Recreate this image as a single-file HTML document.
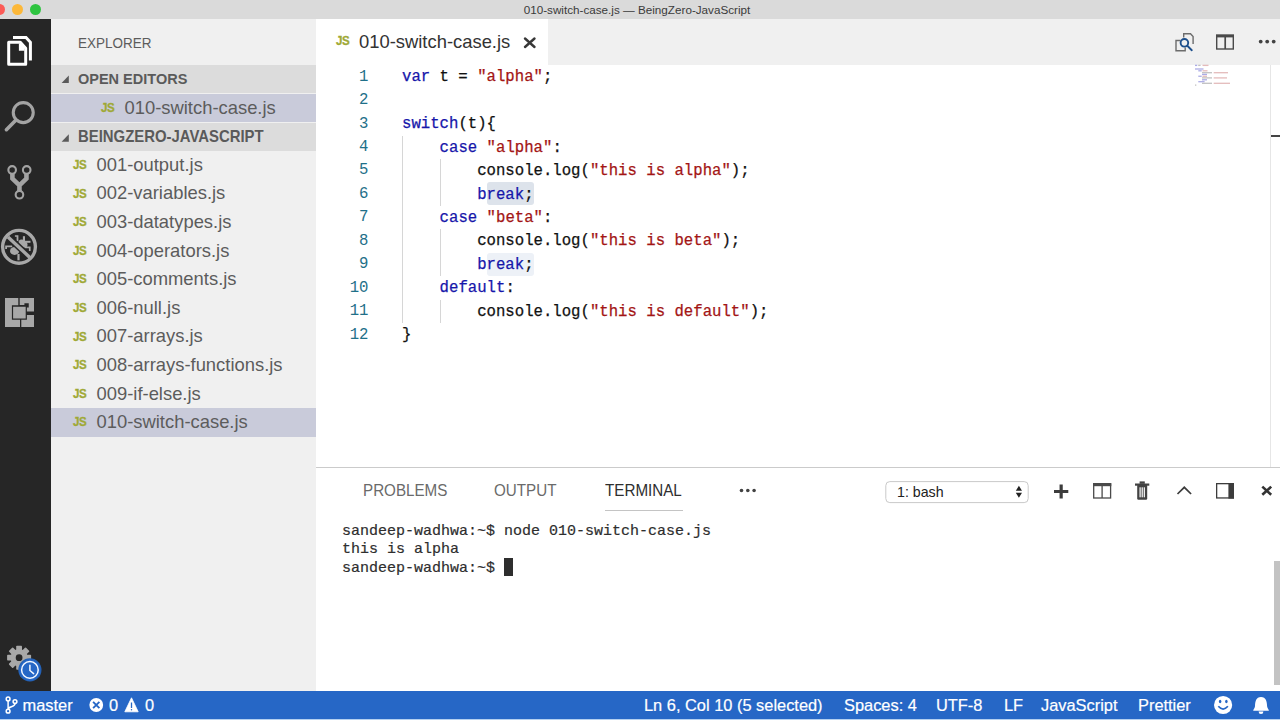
<!DOCTYPE html>
<html><head><meta charset="utf-8">
<style>
*{margin:0;padding:0;box-sizing:border-box}
html,body{width:1280px;height:720px;overflow:hidden;background:#fff;font-family:"Liberation Sans",sans-serif}
.a{position:absolute}
svg{position:absolute;overflow:visible}
#title{left:0;top:0;width:1280px;height:19px;background:#dadada}
#title .t{left:-3px;width:1280px;top:3px;text-align:center;font-size:11.7px;color:#3a3a3a;line-height:14px}
.tl{width:11px;height:11px;border-radius:50%;top:3.7px}
#act{left:0;top:19px;width:51px;height:672px;background:#262626}
#side{left:51px;top:19px;width:265px;height:672px;background:#f0f0f0}
.row{position:absolute;left:0;width:265px;height:28.6px;font-size:18.4px;color:#5c5c5c;line-height:28.6px;white-space:nowrap}
.hdr{background:#dcdcdc;font-weight:bold;color:#5a5a5a}
.hdr span{top:0.4px;transform:scaleY(1.05);transform-origin:0 20px}
.js{position:absolute;font-weight:bold;color:#9fa936;font-size:13.4px;letter-spacing:-0.6px;transform:scaleX(0.86);transform-origin:0 0;margin-top:0.3px;-webkit-text-stroke:0.35px #9fa936}
#tabs{left:316px;top:19px;width:964px;height:45.5px;background:#f0f0f0}
#tab{left:316px;top:19px;width:232px;height:45.5px;background:#fff}
#editor{left:316px;top:64.5px;width:964px;height:403px;background:#fff}
.ln{position:absolute;left:316px;width:52.5px;text-align:right;font-family:"Liberation Mono",monospace;font-size:15.66px;line-height:23.45px;color:#1f7089;height:23.45px}
.cd{position:absolute;left:402px;font-family:"Liberation Mono",monospace;font-size:15.66px;line-height:23.45px;color:#111;white-space:pre;height:23.45px;-webkit-text-stroke:0.25px currentColor}
.cd span{-webkit-text-stroke:0.25px currentColor}
.k{color:#1616aa}
.s{color:#a31515}
.ig{position:absolute;width:1px;background:#d6d6d6}
#panel{left:316px;top:467px;width:964px;height:224px;background:#fff;border-top:1px solid #cbcbcb}
.pt{position:absolute;font-size:15.2px;color:#6a6a6a;top:481px;line-height:20px;transform:scaleY(1.07);transform-origin:0 15.3px}
.term{position:absolute;left:342px;font-family:"Liberation Mono",monospace;font-size:15px;line-height:18.6px;color:#2e2e2e;white-space:pre;-webkit-text-stroke:0.2px #2e2e2e}
#status{left:0;top:691px;width:1280px;height:27.5px;background:#2667c6;color:#fff;font-size:16.4px}
#status .i{position:absolute;top:3px;line-height:21px;white-space:nowrap;-webkit-text-stroke:0.2px #fff;transform:translateY(1px) scaleY(1.06);transform-origin:0 16px}
</style></head><body>
<!-- title bar -->
<div id="title" class="a">
  <div class="a t">010-switch-case.js — BeingZero-JavaScript</div>
  <div class="a tl" style="left:-6.3px;background:#fb5b57"></div>
  <div class="a tl" style="left:11.7px;background:#fcb83a"></div>
  <div class="a tl" style="left:29.6px;background:#2ec440"></div>
</div>

<!-- activity bar -->
<div id="act" class="a"></div>
<svg width="51" height="720" style="left:0;top:0">
  <!-- files -->
  <g fill="none" stroke="#fff" stroke-width="3">
    <path d="M13,37.5 H26 L30.4,42.3 V60.5"/>
    <path d="M8.7,42.3 H20.3 L25.7,48.2 V64.3 H8.7 Z" stroke-linejoin="round"/>
  </g>
  <path d="M18.9,43.5 H21 L24.4,47.3 V50.8 H18.9 Z" fill="#fff"/>
  <!-- search -->
  <g fill="none" stroke="#a3a3a3">
    <circle cx="23.25" cy="112.6" r="10" stroke-width="3.1"/>
    <path d="M6.4,129.7 L15.5,120.6" stroke-width="3.6" stroke-linecap="round"/>
  </g>
  <!-- git -->
  <g fill="none" stroke="#a3a3a3">
    <circle cx="12.15" cy="169.95" r="3.8" stroke-width="2.1"/>
    <circle cx="26.7" cy="169.95" r="3.8" stroke-width="2.1"/>
    <circle cx="19.45" cy="194.7" r="3.8" stroke-width="2.1"/>
    <path d="M12.4,173.8 V178.6 L19.45,185.3 L26.45,178.6 V173.8 M19.45,185 V191" stroke-width="4.6" stroke-linejoin="miter"/>
  </g>
  <!-- debug -->
  <g fill="#a8a8a8">
    <path d="M14.9,235.2 H18.4 V241 H16.6 V236.8 H14.9 Z"/>
    <path d="M22.9,236.2 H25 V241 H22.9 Z"/>
    <ellipse cx="23" cy="243.6" rx="5" ry="3.6" transform="rotate(35 23 243.6)"/>
    <path d="M25,240.8 H30.5 V242.8 H25 Z"/>
    <path d="M25,246.4 H30.6 V251 H28.9 V248.2 H25 Z"/>
    <ellipse cx="14.6" cy="251" rx="4.6" ry="3.9"/>
    <path d="M5.2,245.5 H12.2 V247.3 H7 V248.9 H5.2 Z"/>
    <path d="M17.4,254 H19.6 V260.3 H17.4 Z"/>
  </g>
  <path d="M8,236.9 L29.8,257.4" stroke="#262626" stroke-width="6.4"/>
  <g fill="none" stroke="#a8a8a8" stroke-width="3.4">
    <circle cx="19" cy="246.8" r="16.4"/>
    <path d="M8,236.9 L29.8,257.4"/>
  </g>
  <!-- extensions -->
  <path fill="#a8a8a8" d="M5,298H18.3V305.3H5ZM5,305H11.9V320H5ZM5,319.7H20V327H5ZM19.7,298H34V303.3H19.7ZM28.75,303H34V311.6H28.75ZM19.7,303H24.4V305H19.7ZM26.9,307.5H29V311.6H26.9ZM26.9,315H34V320H26.9ZM21.3,319.7H34V327H21.3ZM13.1,306.8H25.7V318.6H13.1Z"/>
  <!-- gear -->
  <g transform="translate(19.1,657.7)">
    <g fill="#a8a8a8">
      <circle r="8.6"/>
      <rect x="-2.9" y="-12" width="5.8" height="24" rx="0.8"/>
      <rect x="-2.9" y="-12" width="5.8" height="24" rx="0.8" transform="rotate(45)"/>
      <rect x="-2.9" y="-12" width="5.8" height="24" rx="0.8" transform="rotate(90)"/>
      <rect x="-2.9" y="-12" width="5.8" height="24" rx="0.8" transform="rotate(135)"/>
    </g>
    <circle r="3.4" fill="#262626"/>
  </g>
  <circle cx="29.9" cy="669.9" r="11.6" fill="#2461b5"/>
  <circle cx="29.9" cy="669.9" r="10.3" fill="#2667c6"/>
  <circle cx="29.9" cy="669.9" r="8.3" fill="none" stroke="#f4f8ff" stroke-width="1.5"/>
  <path d="M29.9,665.2 V670.5 L33.6,673.6" fill="none" stroke="#f4f8ff" stroke-width="1.5" stroke-linecap="round"/>
</svg>

<!-- sidebar -->
<div id="side" class="a">
  <div class="a" style="left:27px;top:16px;font-size:14.2px;color:#5c5c5c;line-height:16px;transform:scaleX(0.95);transform-origin:0 0">EXPLORER</div>
  <div class="row hdr" style="top:45.8px;font-size:14.5px"><span class="a" style="left:27px">OPEN EDITORS</span></div>
  <div class="row" style="top:74.8px;background:#c9cbda"><span class="js" style="left:50px">JS</span><span class="a" style="left:73.5px">010-switch-case.js</span></div>
  <div class="row hdr" style="top:103.8px;font-size:14.9px"><span class="a" style="left:27px">BEINGZERO-JAVASCRIPT</span></div>
  <div class="row" style="top:131.8px"><span class="js" style="left:22px">JS</span><span class="a" style="left:45.5px">001-output.js</span></div>
  <div class="row" style="top:160.4px"><span class="js" style="left:22px">JS</span><span class="a" style="left:45.5px">002-variables.js</span></div>
  <div class="row" style="top:189px"><span class="js" style="left:22px">JS</span><span class="a" style="left:45.5px">003-datatypes.js</span></div>
  <div class="row" style="top:217.6px"><span class="js" style="left:22px">JS</span><span class="a" style="left:45.5px">004-operators.js</span></div>
  <div class="row" style="top:246.2px"><span class="js" style="left:22px">JS</span><span class="a" style="left:45.5px">005-comments.js</span></div>
  <div class="row" style="top:274.8px"><span class="js" style="left:22px">JS</span><span class="a" style="left:45.5px">006-null.js</span></div>
  <div class="row" style="top:303.4px"><span class="js" style="left:22px">JS</span><span class="a" style="left:45.5px">007-arrays.js</span></div>
  <div class="row" style="top:332px"><span class="js" style="left:22px">JS</span><span class="a" style="left:45.5px">008-arrays-functions.js</span></div>
  <div class="row" style="top:360.6px"><span class="js" style="left:22px">JS</span><span class="a" style="left:45.5px">009-if-else.js</span></div>
  <div class="row" style="top:389.2px;background:#c9cbda"><span class="js" style="left:22px">JS</span><span class="a" style="left:45.5px">010-switch-case.js</span></div>
</div>
<svg width="20" height="200" style="left:0;top:0">
  <path d="M68.8,75.6 V83.1 H61.6 Z" fill="#5a5a5a"/>
  <path d="M68.8,134.2 V141.7 H61.6 Z" fill="#5a5a5a"/>
</svg>

<!-- tabs -->
<div id="tabs" class="a"></div>
<div id="tab" class="a">
  <span class="js" style="left:20px;top:14px">JS</span>
  <span class="a" style="left:43px;top:12px;font-size:18.4px;color:#333;line-height:22px">010-switch-case.js</span>
</div>
<svg width="1280" height="64" style="left:0;top:0">
  <path d="M525,38.5 L534.5,47 M534.5,38.5 L525,47" stroke="#383838" stroke-width="2.4" stroke-linecap="round"/>
  <!-- preview icon -->
  <g fill="none" stroke="#6c6c6c" stroke-width="1.4">
    <path d="M1183.7,37.5 V33.8 H1190.5 L1193.1,36.6 V44"/>
    <path d="M1180.5,40.5 H1176 V50.8 H1185.2 V47.5"/>
  </g>
  <g fill="none" stroke="#1d4f8c" stroke-width="1.9">
    <circle cx="1184.4" cy="42.8" r="3.8"/>
    <path d="M1187.3,45.8 L1191.8,50.2" stroke-linecap="round"/>
  </g>
  <!-- split icon -->
  <g fill="none" stroke="#4a4a4a" stroke-width="1.4">
    <rect x="1216.7" y="35.5" width="16.6" height="13.5"/>
    <path d="M1225.2,35.5 V49" stroke-width="1.7"/>
  </g>
  <rect x="1216" y="34.4" width="18" height="3" fill="#4a4a4a"/>
  <g fill="#424242">
    <circle cx="1260.7" cy="41.6" r="1.9"/>
    <circle cx="1267.2" cy="41.6" r="1.9"/>
    <circle cx="1273.7" cy="41.6" r="1.9"/>
  </g>
</svg>

<!-- editor -->
<div id="editor" class="a"></div>
<div class="a" style="left:487px;top:182.3px;width:46.6px;height:22.6px;background:#dde3eb;border-radius:3px"></div>
<div class="a" style="left:487px;top:253px;width:46.6px;height:22.6px;background:#edf1f7;border-radius:3px"></div>
<div class="ig" style="left:402px;top:135.6px;height:187.6px"></div>
<div class="ig" style="left:440px;top:159px;height:46.9px"></div>
<div class="ig" style="left:440px;top:229.4px;height:46.9px"></div>
<div class="ig" style="left:440px;top:299.8px;height:23.45px"></div>
<div class="ln" style="top:65.6px">1</div>
<div class="ln" style="top:89.05px">2</div>
<div class="ln" style="top:112.5px">3</div>
<div class="ln" style="top:135.95px">4</div>
<div class="ln" style="top:159.4px">5</div>
<div class="ln" style="top:182.85px">6</div>
<div class="ln" style="top:206.3px">7</div>
<div class="ln" style="top:229.75px">8</div>
<div class="ln" style="top:253.2px">9</div>
<div class="ln" style="top:276.65px">10</div>
<div class="ln" style="top:300.1px">11</div>
<div class="ln" style="top:323.55px">12</div>

<div class="cd" style="top:66.3px"><span class="k">var</span> t = <span class="s">"alpha"</span>;</div>
<div class="cd" style="top:113.2px"><span class="k">switch</span>(t){</div>
<div class="cd" style="top:136.65px">    <span class="k">case</span> <span class="s">"alpha"</span>:</div>
<div class="cd" style="top:160.1px">        console.log(<span class="s">"this is alpha"</span>);</div>
<div class="cd" style="top:183.55px">        <span class="k">break</span>;</div>
<div class="cd" style="top:207px">    <span class="k">case</span> <span class="s">"beta"</span>:</div>
<div class="cd" style="top:230.45px">        console.log(<span class="s">"this is beta"</span>);</div>
<div class="cd" style="top:253.9px">        <span class="k">break</span>;</div>
<div class="cd" style="top:277.35px">    <span class="k">default</span>:</div>
<div class="cd" style="top:300.8px">        console.log(<span class="s">"this is default"</span>);</div>
<div class="cd" style="top:324.25px">}</div>

<!-- minimap -->
<svg width="1280" height="100" style="left:0;top:0"><g stroke-width="1.3" opacity="0.45"><path d="M1195.0,65.40 H1197.2" stroke="#4848c8"/><path d="M1198.2,65.40 H1200.6" stroke="#777"/><path d="M1202.5,65.40 H1208.5" stroke="#c46a6a"/><path d="M1195.0,69.00 H1203.5" stroke="#4848c8"/><path d="M1198.3,70.80 H1201.7" stroke="#4848c8"/><path d="M1202.5,70.80 H1207.5" stroke="#c46a6a"/><path d="M1202.0,72.70 H1212.0" stroke="#777"/><path d="M1213.7,72.70 H1228.0" stroke="#c46a6a"/><path d="M1202.0,74.40 H1207.0" stroke="#4848c8"/><path d="M1198.3,76.25 H1201.7" stroke="#4848c8"/><path d="M1202.5,76.25 H1207.0" stroke="#c46a6a"/><path d="M1202.0,77.90 H1212.0" stroke="#777"/><path d="M1213.7,77.90 H1227.0" stroke="#c46a6a"/><path d="M1202.0,79.80 H1207.0" stroke="#4848c8"/><path d="M1198.3,81.70 H1204.6" stroke="#4848c8"/><path d="M1202.0,83.30 H1212.0" stroke="#777"/><path d="M1213.7,83.30 H1230.0" stroke="#c46a6a"/><path d="M1195.0,85.20 H1196.3" stroke="#777"/></g></svg>
<div class="a" style="left:1270px;top:64.5px;width:1px;height:403px;background:#e6e6e6"></div>
<div class="a" style="left:1271px;top:134.5px;width:9px;height:2.2px;background:#444"></div>

<!-- panel -->
<div id="panel" class="a"></div>
<div class="pt" style="left:363px">PROBLEMS</div>
<div class="pt" style="left:494px">OUTPUT</div>
<div class="pt" style="left:605px;color:#2e2e2e">TERMINAL</div>
<div class="a" style="left:605px;top:510px;width:78px;height:1.3px;background:#c4c4c4"></div>
<svg width="1280" height="520" style="left:0;top:0">
  <g fill="#424242"><circle cx="741.5" cy="490.5" r="1.8"/><circle cx="747.8" cy="490.5" r="1.8"/><circle cx="754.1" cy="490.5" r="1.8"/></g>
  <rect x="885.8" y="481.6" width="142.4" height="21" rx="4" fill="#fff" stroke="#c9c9c9" stroke-width="1"/>
  <path d="M1015.8,490.8 L1018.9,485.8 L1022,490.8 Z M1015.8,492.8 L1018.9,497.8 L1022,492.8 Z" fill="#222"/>
  <path d="M1054,491.5 H1068.3 M1061.15,484.4 V498.6" stroke="#3c3c3c" stroke-width="3.2"/>
  <g fill="none" stroke="#4a4a4a" stroke-width="1.3">
    <rect x="1093.7" y="484" width="16.9" height="14"/>
    <path d="M1102.1,484 V498"/>
  </g>
  <rect x="1093" y="483" width="18.3" height="3.2" fill="#4a4a4a"/>
  <g fill="#424242">
    <rect x="1137.2" y="484.5" width="10" height="15.2" rx="1.2"/>
    <rect x="1135" y="483.5" width="14.3" height="2.2"/>
    <rect x="1139.6" y="481.4" width="5.2" height="2.4"/>
  </g>
  <g fill="#fff"><rect x="1139.5" y="487.3" width="1.2" height="10"/><rect x="1141.6" y="487.3" width="1.2" height="10"/><rect x="1143.7" y="487.3" width="1.2" height="10"/></g>
  <path d="M1177.5,494 L1184.3,487.3 L1191.1,494" fill="none" stroke="#3c3c3c" stroke-width="1.7"/>
  <rect x="1216.65" y="483.65" width="16.7" height="14.3" fill="none" stroke="#3c3c3c" stroke-width="1.3"/>
  <rect x="1228.4" y="483" width="5.6" height="15.6" fill="#3c3c3c"/>
  <path d="M1262.3,486.6 L1271.2,494.8 M1271.2,486.6 L1262.3,494.8" stroke="#333" stroke-width="2.6"/>
</svg>
<div class="a" style="left:897px;top:481.5px;font-size:14.2px;line-height:20px;color:#222">1: bash</div>
<div class="term" style="top:523px">sandeep-wadhwa:~$ node 010-switch-case.js</div>
<div class="term" style="top:541.4px">this is alpha</div>
<div class="term" style="top:560.4px">sandeep-wadhwa:~$ </div>
<div class="a" style="left:504.3px;top:558.3px;width:9px;height:17.9px;background:#2e2e2e"></div>
<div class="a" style="left:1273.9px;top:561.4px;width:6.1px;height:123.6px;background:#c3c3c3"></div>

<!-- status -->
<div id="status" class="a">
  <span class="i" style="left:22.5px">master</span>
  <span class="i" style="left:109px">0</span>
  <span class="i" style="left:145px">0</span>
  <span class="i" style="left:644px">Ln 6, Col 10 (5 selected)</span>
  <span class="i" style="left:844px">Spaces: 4</span>
  <span class="i" style="left:936px">UTF-8</span>
  <span class="i" style="left:1004px">LF</span>
  <span class="i" style="left:1041px">JavaScript</span>
  <span class="i" style="left:1138px">Prettier</span>
</div>
<div class="a" style="left:0;top:718.5px;width:1280px;height:1.5px;background:#b4d0f0"></div>
<svg width="1280" height="720" style="left:0;top:0">
  <!-- branch -->
  <g fill="none" stroke="#fff" stroke-width="1.5">
    <circle cx="8.1" cy="699" r="1.9"/>
    <circle cx="8.1" cy="711.2" r="1.9"/>
    <circle cx="15" cy="701.6" r="1.9"/>
    <path d="M8.1,701 V709.3 M15,703.5 C15,707.5 8.5,706 8.1,709.3"/>
  </g>
  <!-- error -->
  <circle cx="96.25" cy="705" r="6.9" fill="#fff"/>
  <path d="M93.1,701.9 L99.4,708.1 M99.4,701.9 L93.1,708.1" stroke="#2667c6" stroke-width="1.9"/>
  <!-- warning -->
  <path d="M131.5,697.8 L138.2,711.8 H124.8 Z" fill="#fff" stroke="#fff" stroke-width="0.8" stroke-linejoin="round"/>
  <path d="M131.5,702.5 V708" stroke="#2667c6" stroke-width="1.3"/>
  <circle cx="131.5" cy="709.7" r="0.75" fill="#2667c6"/>
  <!-- smiley -->
  <circle cx="1223.1" cy="705" r="9.1" fill="#fff"/>
  <ellipse cx="1220.1" cy="701.5" rx="1.25" ry="1.75" fill="#2667c6"/>
  <ellipse cx="1226.4" cy="701.5" rx="1.25" ry="1.75" fill="#2667c6"/>
  <path d="M1218.3,706.3 Q1223.1,711.8 1227.9,706.3" fill="none" stroke="#2667c6" stroke-width="1.7"/>
  <!-- bell -->
  <path d="M1261,697 C1256,697 1255.2,701.5 1255,706.3 C1254.9,708.3 1253.2,709.3 1253.2,710.8 H1268.9 C1268.9,709.3 1267.2,708.3 1267.1,706.3 C1266.9,701.5 1266,697 1261,697 Z" fill="#fff"/>
  <path d="M1258.6,711.6 H1263.4 A2.4,2.5 0 0 1 1258.6,711.6 Z" fill="#fff"/>
</svg>
</body></html>
